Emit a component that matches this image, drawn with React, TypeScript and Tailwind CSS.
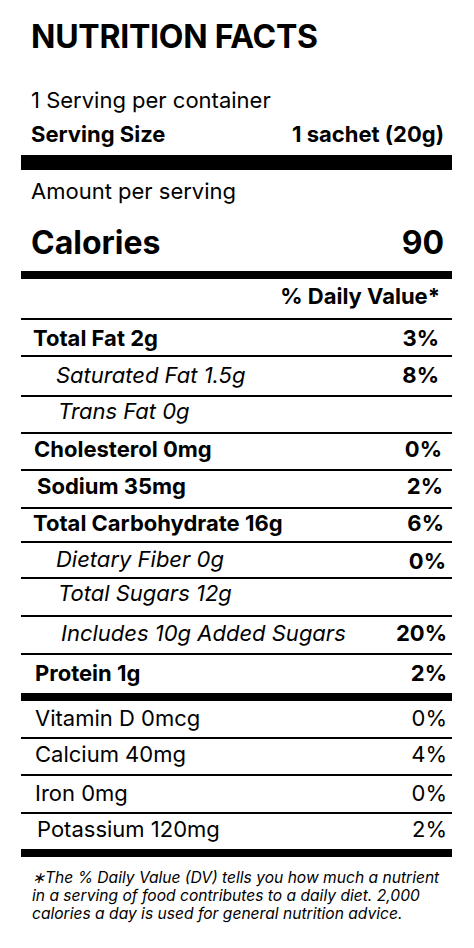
import React from "react";

type RowProps = {
  label: string;
  value?: string;
  labelCls: string;
  valueCls: string;
  rowCls: string;
};

function Row({ label, value, labelCls, valueCls, rowCls }: RowProps) {
  return (
    <div className={`flex justify-between items-start text-[22px] leading-[24px] ${rowCls}`}>
      <span className={labelCls}>{label}</span>
      {value ? <span className={valueCls}>{value}</span> : null}
    </div>
  );
}

export default function App() {
  return (
    <div
      className="w-[474px] h-[948px] bg-white text-black overflow-hidden"
      style={{ fontFamily: "Inter, 'Liberation Sans', sans-serif" }}
    >
      <div className="ml-[21px] w-[431px] flex flex-col">
        <div className="mt-[21px] pl-[10px] text-[32px] leading-[32px] font-bold tracking-[-0.25px]">NUTRITION FACTS</div>
        <div className="mt-[35px] pl-[10px] text-[22px] leading-[24px]">1 Serving per container</div>
        <div className="mt-[10px] pl-[10px] pr-[8px] flex justify-between text-[22px] leading-[24px] font-bold">
          <span>Serving Size</span>
          <span>1 sachet (20g)</span>
        </div>
        <div className="mt-[9px] h-[15px] bg-black" />
        <div className="mt-[9px] pl-[10px] text-[22px] leading-[24px]">Amount per serving</div>
        <div className="mt-[24px] pl-[10px] pr-[8px] flex justify-between text-[32px] leading-[32px] font-bold">
          <span>Calories</span>
          <span>90</span>
        </div>
        <div className="mt-[12px] h-[8px] bg-black" />
        <div className="mt-[5px] pr-[12px] text-right text-[22px] leading-[24px] font-bold">% Daily Value*</div>
        <div className="mt-[10px] h-[2px] bg-black" />

        <Row label="Total Fat 2g" value="3%" labelCls="font-bold pl-[12px]" valueCls="font-bold pr-[13px]" rowCls="h-[35px] pt-[6px]" />
        <div className="h-[2px] bg-black" />
        <Row label="Saturated Fat 1.5g" value="8%" labelCls="italic pl-[35px]" valueCls="font-bold pr-[13px]" rowCls="h-[38px] pt-[6px]" />
        <div className="h-[2px] bg-black" />
        <Row label="Trans Fat 0g" labelCls="italic pl-[37px]" valueCls="" rowCls="h-[35px] pt-[2px]" />
        <div className="h-[2px] bg-black" />
        <Row label="Cholesterol 0mg" value="0%" labelCls="font-bold pl-[13px]" valueCls="font-bold pr-[10px]" rowCls="h-[35px] pt-[3px]" />
        <div className="h-[2px] bg-black" />
        <Row label="Sodium 35mg" value="2%" labelCls="font-bold pl-[16px]" valueCls="font-bold pr-[9px]" rowCls="h-[36px] pt-[3px]" />
        <div className="h-[2px] bg-black" />
        <Row label="Total Carbohydrate 16g" value="6%" labelCls="font-bold pl-[12px]" valueCls="font-bold pr-[8px]" rowCls="h-[32px] pt-[2px]" />
        <div className="h-[2px] bg-black" />
        <Row label="Dietary Fiber 0g" value="0%" labelCls="italic pl-[35px]" valueCls="font-bold pr-[6px] pt-[2px]" rowCls="h-[34px] pt-[4px]" />
        <div className="h-[2px] bg-black" />
        <Row label="Total Sugars 12g" labelCls="italic pl-[37px]" valueCls="" rowCls="h-[36px] pt-[2px]" />
        <div className="h-[2px] bg-black" />
        <Row label="Includes 10g Added Sugars" value="20%" labelCls="italic pl-[40px]" valueCls="font-bold pr-[5px]" rowCls="h-[36px] pt-[4px]" />
        <div className="h-[2px] bg-black" />
        <Row label="Protein 1g" value="2%" labelCls="font-bold pl-[14px]" valueCls="font-bold pr-[5px]" rowCls="h-[38px] pt-[6px]" />
        <div className="h-[8px] bg-black" />
        <Row label="Vitamin D 0mcg" value="0%" labelCls="pl-[14px]" valueCls="pr-[5px]" rowCls="h-[36px] pt-[5px]" />
        <div className="h-[2px] bg-black" />
        <Row label="Calcium 40mg" value="4%" labelCls="pl-[14px]" valueCls="pr-[5px]" rowCls="h-[35px] pt-[3px]" />
        <div className="h-[2px] bg-black" />
        <Row label="Iron 0mg" value="0%" labelCls="pl-[14px]" valueCls="pr-[5px]" rowCls="h-[36px] pt-[5px]" />
        <div className="h-[2px] bg-black" />
        <Row label="Potassium 120mg" value="2%" labelCls="pl-[16px]" valueCls="pr-[5px]" rowCls="h-[35px] pt-[3px]" />
        <div className="h-[8px] bg-black" />
        <p className="mt-[12px] pl-[11px] text-[15.6px] leading-[18px] italic">
          ∗The % Daily Value (DV) tells you how much a nutrient in a serving of food contributes to a daily diet. 2,000 calories a day is used for general nutrition advice.
        </p>
      </div>
    </div>
  );
}
